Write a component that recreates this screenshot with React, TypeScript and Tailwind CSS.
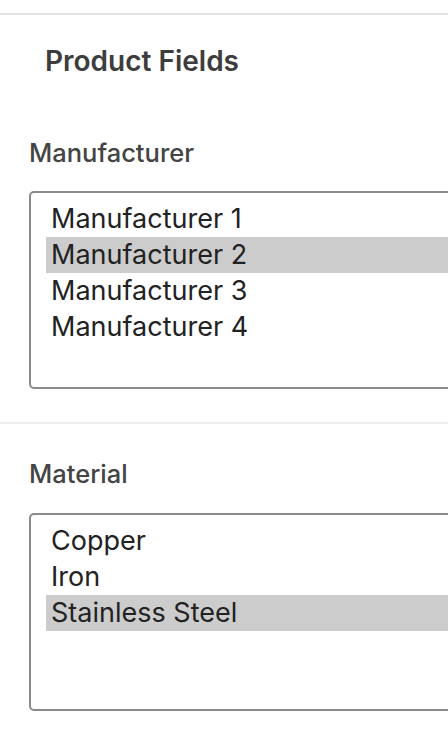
const manufacturers = ['Manufacturer 1', 'Manufacturer 2', 'Manufacturer 3', 'Manufacturer 4'];
const materials = ['Copper', 'Iron', 'Stainless Steel'];

function ListBox({ options, selected }: { options: string[]; selected: string }) {
  return (
    <div className="w-[520px] h-[198px] border-2 border-[#8a8a8a] rounded-[5px] pt-[8px] pl-[15px]">
      {options.map((o) => (
        <div
          key={o}
          className={`h-[36px] leading-[36px] pl-[5px] text-[27px] text-[#222] ${o === selected ? 'bg-[#cccccc]' : ''}`}
        >
          {o}
        </div>
      ))}
    </div>
  );
}

export default function App() {
  return (
    <div className="w-[448px] h-[736px] overflow-hidden bg-white font-['Inter',sans-serif]">
      <div className="mt-[13px] border-t-2 border-[#e2e2e2]">
        <h2 className="pl-[45px] pt-[28px] text-[28px] leading-[36px] font-semibold text-[#3d3d3d]">Product Fields</h2>
        <div className="pl-[29px] pt-[59px] pb-[33px]">
          <div className="text-[25.5px] leading-[30px] font-medium text-[#444]">Manufacturer</div>
          <div className="mt-[23px]">
            <ListBox options={manufacturers} selected="Manufacturer 2" />
          </div>
        </div>
        <div className="border-t-2 border-[#eeeeee] pl-[29px] pt-[35px]">
          <div className="text-[25.5px] leading-[30px] font-medium text-[#444]">Material</div>
          <div className="mt-[24px]">
            <ListBox options={materials} selected="Stainless Steel" />
          </div>
        </div>
      </div>
    </div>
  );
}
